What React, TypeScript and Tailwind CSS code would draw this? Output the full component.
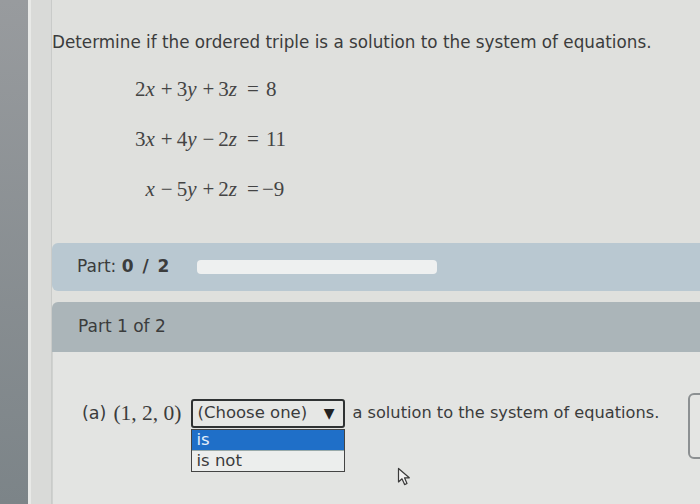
import { useState } from "react";

const sans = { fontFamily: '"DejaVu Sans", Verdana, sans-serif' };
const serif = { fontFamily: '"Liberation Serif", "Times New Roman", serif' };

const equations = [
  { lhs: ["2", "x", "+", "3", "y", "+", "3", "z"], rhs: "8" },
  { lhs: ["3", "x", "+", "4", "y", "\u2212", "2", "z"], rhs: "11" },
  { lhs: ["x", "\u2212", "5", "y", "+", "2", "z"], rhs: "\u22129" },
];

function Term({ t }: { t: string }) {
  if (t === "+" || t === "\u2212") return <span className="px-[4px]">{t}</span>;
  if (/[xyz]/.test(t)) return <i className="pr-[2px]">{t}</i>;
  return <span>{t}</span>;
}

function Equation({ lhs, rhs }: { lhs: string[]; rhs: string }) {
  return (
    <>
      <span className="text-right">
        {lhs.map((t, i) => (
          <Term key={i} t={t} />
        ))}
      </span>
      <span className="pl-[8px]">
        =<span className={rhs.startsWith("\u2212") ? "pl-[3px]" : "pl-[7px]"}>{rhs}</span>
      </span>
    </>
  );
}

export default function App() {
  const [open] = useState(true);

  return (
    <div className="flex h-[504px] w-[700px] overflow-hidden bg-[#dfe0dd] text-[#3b3c3c]">
      {/* dark frame strip on the left */}
      <div className="w-[28px] shrink-0 bg-gradient-to-b from-[#989b9e] to-[#7c8488]" />
      <div className="w-[24px] shrink-0 border-l-[3px] border-r border-l-[#e8e9e7] border-r-[#c9cbc9] bg-[#d9dad8]" />

      <main className="flex min-w-0 flex-1 flex-col">
        <p className="pt-[31px] text-[16.8px] leading-[22px] whitespace-nowrap" style={sans}>
          Determine if the ordered triple is a solution to the system of equations.
        </p>

        <div
          className="mt-[24px] ml-[83px] grid w-max grid-cols-[auto_auto] gap-y-[26px] text-[21px] leading-[24px] text-[#444]"
          style={serif}
        >
          {equations.map((e, i) => (
            <Equation key={i} lhs={e.lhs} rhs={e.rhs} />
          ))}
        </div>

        {/* progress bar */}
        <div className="mt-[42px] flex h-[48px] items-center rounded-l-md bg-[#b9c8d1] pl-[25px]" style={sans}>
          <span className="text-[17px] whitespace-nowrap">
            Part: <b className="font-bold tracking-[1.5px]">0 / 2</b>
          </span>
          <div className="ml-[26px] h-[14px] w-[240px] rounded-sm bg-[#eef0f0]" />
        </div>

        {/* part header */}
        <div className="mt-[11px] flex h-[50px] items-center rounded-tl-md bg-[#abb5b9] pl-[26px] text-[17px]" style={sans}>
          Part 1 of 2
        </div>

        <div className="flex flex-1 flex-col border-l border-[#cfd1cf] bg-[#e3e4e2]">
          <div className="mt-[47px] flex items-start pl-[29px]">
            <div className="flex h-[29px] items-center text-[17.5px] whitespace-nowrap" style={sans}>
              (a)
              <span className="ml-[7px] text-[21.5px]" style={serif}>
                (1, 2, 0)
              </span>
            </div>

            <div className="relative ml-[10px]">
              <div
                className="flex h-[29px] w-[154px] items-center justify-between rounded-[3px] border-2 border-[#2f3233] bg-[#e6e7e5] pl-[4px] pr-[9px] text-[16.5px] text-[#3a3b3c]"
                style={sans}
              >
                <span>(Choose one)</span>
                <span className="text-[14px] text-[#222]">▼</span>
              </div>
              {open && (
                <ul
                  className="absolute left-0 top-[30px] w-[154px] border border-[#444] bg-[#eceeed] text-[16.5px] leading-[20px]"
                  style={sans}
                >
                  <li className="bg-[#1f6fc8] pl-[4px] text-[#e8f0fa]">is</li>
                  <li className="border-t border-[#9aa] pl-[4px]">is not</li>
                </ul>
              )}
            </div>

            <div className="ml-[7px] flex h-[29px] items-center text-[16.2px] whitespace-nowrap" style={sans}>
              a solution to the system of equations.
            </div>

            <div className="ml-auto mr-[-50px] mt-[-6px] h-[66px] w-[62px] shrink-0 rounded-md border-2 border-[#8c9092] bg-[#e4e5e3]" />
          </div>

          {/* mouse pointer */}
          <div className="relative">
            <svg
              className="absolute left-[344px] top-[8px]"
              width="17"
              height="20"
              viewBox="0 0 17 20"
            >
              <path
                d="M1.5 1.5 L1.5 15 L5 11.8 L7.6 17.6 L10 16.5 L7.5 10.8 L12.3 10.8 Z"
                fill="#f2f2f2"
                stroke="#3a3a3a"
                strokeWidth="1.2"
                strokeLinejoin="round"
              />
            </svg>
          </div>
        </div>
      </main>
    </div>
  );
}
